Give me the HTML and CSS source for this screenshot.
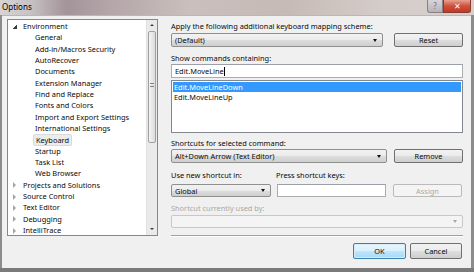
FILE: index.html
```html
<!DOCTYPE html>
<html lang="en">
<head>
    <meta charset="UTF-8">
    <meta name="viewport" content="width=device-width, initial-scale=1.0">
    <title>Options</title>
    <link rel="stylesheet" href="styles.css">
</head>
<body>
    <div class="window">
        <div class="titlebar">
            <span class="title">Options</span>
            <div class="caption-buttons">
                <span class="cap help">?</span>
                <span class="cap close">&#x2715;</span>
            </div>
        </div>
        <div class="client">
            <div class="tree">
                <div class="tree-items">
                    <div class="node open"><span class="twisty"></span>Environment</div>
                    <div class="leaf">General</div>
                    <div class="leaf">Add-in/Macros Security</div>
                    <div class="leaf">AutoRecover</div>
                    <div class="leaf">Documents</div>
                    <div class="leaf">Extension Manager</div>
                    <div class="leaf">Find and Replace</div>
                    <div class="leaf">Fonts and Colors</div>
                    <div class="leaf">Import and Export Settings</div>
                    <div class="leaf">International Settings</div>
                    <div class="leaf"><span class="selected">Keyboard</span></div>
                    <div class="leaf">Startup</div>
                    <div class="leaf">Task List</div>
                    <div class="leaf">Web Browser</div>
                    <div class="node"><span class="twisty"></span>Projects and Solutions</div>
                    <div class="node"><span class="twisty"></span>Source Control</div>
                    <div class="node"><span class="twisty"></span>Text Editor</div>
                    <div class="node"><span class="twisty"></span>Debugging</div>
                    <div class="node"><span class="twisty"></span>IntelliTrace</div>
                </div>
                <div class="scrollbar">
                    <div class="sb-arrow up"></div>
                    <div class="sb-track">
                        <div class="sb-thumb"><span class="grip"></span></div>
                    </div>
                    <div class="sb-arrow down"></div>
                </div>
            </div>

            <div class="panel">
                <div class="label l1">Apply the following additional keyboard mapping scheme:</div>
                <div class="row r1">
                    <div class="combo w212"><span>(Default)</span><span class="arrow"></span></div>
                    <div class="btn">Reset</div>
                </div>
                <div class="label l2">Show commands containing:</div>
                <div class="textbox t1">Edit.MoveLine<span class="caret"></span></div>
                <div class="listbox">
                    <div class="item sel">Edit.MoveLineDown</div>
                    <div class="item">Edit.MoveLineUp</div>
                </div>
                <div class="label l3">Shortcuts for selected command:</div>
                <div class="row r3">
                    <div class="combo w216"><span>Alt+Down Arrow (Text Editor)</span><span class="arrow"></span></div>
                    <div class="btn">Remove</div>
                </div>
                <div class="row labels">
                    <div class="label w106">Use new shortcut in:</div>
                    <div class="label">Press shortcut keys:</div>
                </div>
                <div class="row r4">
                    <div class="combo w100"><span>Global</span><span class="arrow"></span></div>
                    <div class="textbox w109"></div>
                    <div class="btn disabled">Assign</div>
                </div>
                <div class="label disabled l5">Shortcut currently used by:</div>
                <div class="combo disabled full"><span></span><span class="arrow"></span></div>
                <div class="separator"></div>
                <div class="row buttons">
                    <div class="btn default">OK</div>
                    <div class="btn cancel">Cancel</div>
                </div>
            </div>
        </div>
        <div class="bottom-frame"></div>
    </div>
</body>
</html>
```

FILE: styles.css
```css
body {
    margin: 0;
    font-family: "Noto Sans", "Open Sans", Arial, sans-serif;
    font-size: 7.4px;
    color: #0a0a0a;
    background: #8c8c8c;
}
.window {
    width: 474px;
    height: 272px;
    display: flex;
    flex-direction: column;
    overflow: hidden;
}
.titlebar {
    height: 15px;
    display: flex;
    justify-content: space-between;
    align-items: flex-start;
    background: linear-gradient(90deg, #d6d4d4 0%, #c9c4c6 6%, #a39499 14%, #b5a7aa 24%, #cbbfbd 40%, #c6bab6 60%, #d4ccc8 80%, #d6d0cc 100%);
}
.title {
    font-size: 8px;
    line-height: 13px;
    padding-left: 2px;
    color: #000;
}
.caption-buttons {
    display: flex;
    margin-right: 3px;
}
.cap {
    height: 13px;
    line-height: 12px;
    text-align: center;
    font-size: 8px;
    border: 1px solid #8a8088;
    border-top: none;
    box-sizing: border-box;
}
.help {
    width: 16px;
    color: #6a7080;
    background: linear-gradient(#d8d4d8, #b8b2b8);
    border-radius: 0 0 0 3px;
}
.close {
    width: 28px;
    color: #fff;
    border-color: #8a3a30;
    background: linear-gradient(#e8a090, #d0503a 50%, #c03a26);
    border-radius: 0 0 3px 0;
}
.client {
    flex: 1;
    display: flex;
    background: #f0f0f0;
    margin: 0 3px 0 2px;
    border-top: 1px solid #b8b8b8;
    box-sizing: border-box;
}
.tree {
    width: 151px;
    height: 217px;
    margin: 3px 0 0 5px;
    border: 1px solid #828790;
    background: #fff;
    box-sizing: border-box;
    display: flex;
    overflow: hidden;
}
.tree-items {
    flex: 1;
    padding-top: 1px;
    overflow: hidden;
}
.tree-items div {
    height: 11.33px;
    line-height: 11.33px;
    white-space: nowrap;
}
.node {
    padding-left: 5px;
    display: flex;
    align-items: center;
}
.twisty {
    width: 0;
    height: 0;
    margin-right: 7px;
    border-top: 3px solid transparent;
    border-bottom: 3px solid transparent;
    border-left: 3px solid #a6a6a6;
}
.node.open .twisty {
    border: none;
    width: 4px;
    height: 4px;
    margin-right: 6px;
    background: linear-gradient(135deg, transparent 50%, #3c3c3c 50%);
}
.leaf {
    padding-left: 27px;
}
.selected {
    display: inline-block;
    line-height: 10px;
    padding: 0 2px;
    margin-left: -2px;
    background: #ececec;
    border: 1px solid #dadada;
    border-radius: 2px;
}
.scrollbar {
    width: 10px;
    display: flex;
    flex-direction: column;
    background: #eaeaea;
    border-left: 1px solid #e0e0e0;
}
.sb-arrow {
    height: 11px;
    position: relative;
}
.sb-arrow::after {
    content: "";
    position: absolute;
    left: 3px;
    top: 4px;
    border-left: 2px solid transparent;
    border-right: 2px solid transparent;
}
.sb-arrow.up::after {
    border-bottom: 2px solid #404040;
}
.sb-arrow.down::after {
    border-top: 2px solid #404040;
}
.sb-track {
    flex: 1;
}
.sb-thumb {
    height: 110px;
    margin: 0 1px;
    border: 1px solid #a0a0a0;
    border-radius: 2px;
    background: linear-gradient(90deg, #f4f4f4, #dcdcdc);
    display: flex;
    align-items: center;
    justify-content: center;
}
.grip {
    width: 4px;
    height: 4px;
    border-top: 1px solid #808080;
    border-bottom: 1px solid #808080;
    box-sizing: border-box;
    position: relative;
    top: -2px;
}
.panel {
    width: 292px;
    margin-left: 13px;
    display: flex;
    flex-direction: column;
}
.label {
    height: 10px;
    line-height: 10px;
    white-space: nowrap;
}
.label.disabled {
    color: #a8a8a8;
}
.row {
    display: flex;
}
.l1 { margin-top: 5px; }
.r1 { margin-top: 2px; height: 14px; justify-content: space-between; }
.l2 { margin-top: 6px; }
.t1 { margin-top: 1px; height: 14px; }
.l3 { margin-top: 5px; }
.r3 { margin-top: 1px; height: 14px; justify-content: space-between; }
.labels { margin-top: 7px; }
.r4 { margin-top: 4px; height: 13px; gap: 6px; }
.r4 .btn { margin-left: 1px; }
.l5 { margin-top: 6px; }
.w212 { width: 212px; }
.w216 { width: 216px; }
.w100 { width: 100px; }
.w109 { width: 109px; }
.w106 { width: 105px; }
.combo {
    display: flex;
    justify-content: space-between;
    align-items: center;
    box-sizing: border-box;
    border: 1px solid #8e8f8f;
    border-radius: 2px;
    padding: 0 5px 0 3px;
    background: linear-gradient(#f2f2f2 0%, #ebebeb 50%, #dddddd 51%, #cfcfcf 100%);
    white-space: nowrap;
}
.combo.full {
    margin-top: 2px;
    height: 13px;
    border-color: #c8c8c8;
    background: #f4f4f4;
}
.arrow {
    width: 0;
    height: 0;
    border-left: 2px solid transparent;
    border-right: 2px solid transparent;
    border-top: 3px solid #101010;
}
.combo.disabled .arrow {
    border-top-color: #a8a8a8;
}
.btn {
    width: 69px;
    box-sizing: border-box;
    border: 1px solid #707070;
    border-radius: 2px;
    background: linear-gradient(#f2f2f2 0%, #ebebeb 50%, #dddddd 51%, #cfcfcf 100%);
    display: flex;
    align-items: center;
    justify-content: center;
}
.btn.disabled {
    color: #a8a8a8;
    border-color: #bababa;
    background: #f4f4f4;
}
.textbox {
    box-sizing: border-box;
    border: 1px solid #abadb3;
    border-top-color: #9ca0ab;
    background: #fff;
    padding-left: 3px;
    display: flex;
    align-items: center;
}
.caret {
    width: 1px;
    height: 9px;
    background: #000;
}
.listbox {
    margin-top: 2px;
    height: 53px;
    box-sizing: border-box;
    border: 1px solid #828790;
    background: #fff;
    padding: 1px 1px 0;
}
.item {
    height: 10px;
    line-height: 10px;
    padding-left: 1px;
}
.item.sel {
    background: #3399ff;
    color: #fff;
}
.separator {
    margin-top: 7px;
    height: 1px;
    background: #a0a0a0;
    border-bottom: 1px solid #fff;
}
.buttons {
    margin-top: 6px;
    height: 16px;
    justify-content: flex-end;
    gap: 4px;
    padding-right: 1px;
}
.buttons .btn {
    width: 53px;
}
.btn.default {
    border-color: #3c7fb1;
    background: linear-gradient(#eaf6fd 0%, #d9f0fc 50%, #bee6fd 51%, #a7d9f5 100%);
    box-shadow: inset 0 0 0 1px #d6ebf8;
}
.btn.cancel {
    width: 52px;
}
.bottom-frame {
    height: 4px;
    background: #7a7a7a;
}
```
